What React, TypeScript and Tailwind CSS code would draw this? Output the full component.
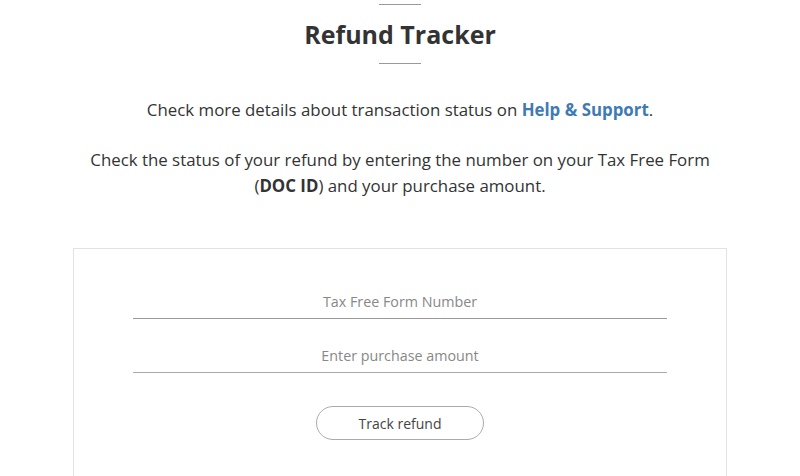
const App = () => {
  return (
    <div
      className="min-h-[476px] bg-white text-[#333]"
      style={{ fontFamily: '"Open Sans", "Noto Sans", sans-serif' }}
    >
      <div className="flex flex-col items-center pt-1">
        <div className="w-[42px] h-px bg-[#999]" />
        <h1 className="mt-[11px] text-[25px] leading-[36px] font-bold text-[#333]">
          Refund Tracker
        </h1>
        <div className="mt-[11px] w-[42px] h-px bg-[#999]" />
      </div>

      <div className="mt-[33px] text-center text-[16.85px] leading-[26px] text-[#333]">
        <p>
          Check more details about transaction status on{" "}
          <a href="#" className="font-bold text-[#3f7ab5]">
            Help &amp; Support
          </a>
          .
        </p>
        <p className="mt-[24px] w-[650px] mx-auto">
          Check the status of your refund by entering the number on your Tax
          Free Form (<b>DOC ID</b>) and your purchase amount.
        </p>
      </div>

      <div className="mt-[49px] mx-auto w-[654px] border border-[#e2e2e2] border-b-0 px-[59px] pt-[41px] pb-[36px]">
        <form className="flex flex-col">
          <input
            type="text"
            placeholder="Tax Free Form Number"
            className="w-full h-[29px] pb-[6px] border-b border-[#999] text-center text-[14.3px] text-[#555] placeholder:text-[#888] outline-none"
          />
          <input
            type="text"
            placeholder="Enter purchase amount"
            className="mt-[25px] w-full h-[29px] pb-[6px] border-b border-[#aaa] text-center text-[14.3px] text-[#555] placeholder:text-[#888] outline-none"
          />
          <button
            type="button"
            className="mt-[33px] mx-auto w-[168px] h-[34px] rounded-full border border-[#aaa] text-[14px] text-[#444] bg-white"
          >
            Track refund
          </button>
        </form>
      </div>
    </div>
  );
};

export default App;
